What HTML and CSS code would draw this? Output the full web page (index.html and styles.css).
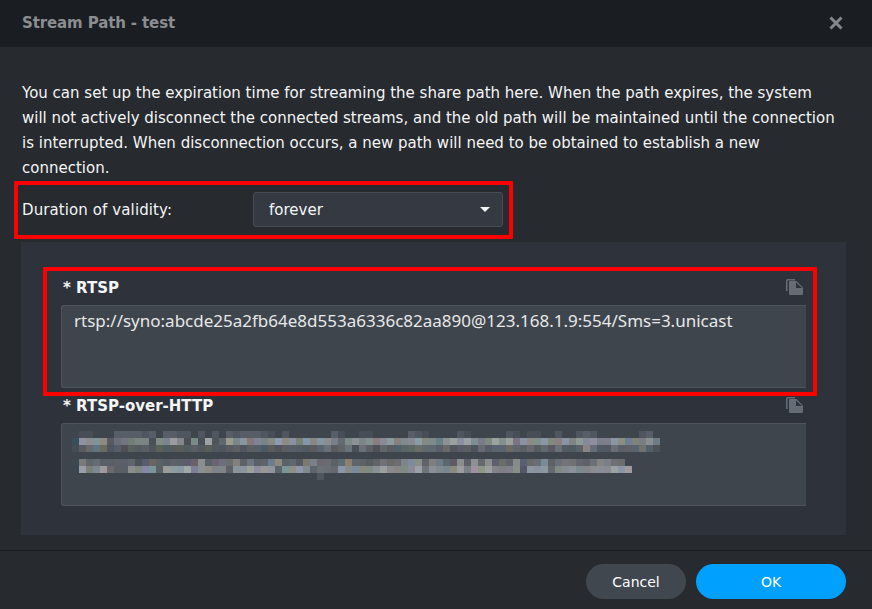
FILE: index.html
```html
<!DOCTYPE html>
<html lang="en">
<head>
<meta charset="utf-8">
<title>Stream Path - test</title>
<link rel="stylesheet" href="styles.css">
</head>
<body>
<div class="dialog">
  <header class="head">
    <h1 class="title">Stream Path - test</h1>
    <svg class="close" viewBox="0 0 14 14" width="14" height="14"><path d="M1.5 1.5l11 11M12.5 1.5l-11 11"/></svg>
  </header>
  <main class="content">
    <p class="intro">You can set up the expiration time for streaming the share path here. When the path expires, the system will not actively disconnect the connected streams, and the old path will be maintained until the connection is interrupted. When disconnection occurs, a new path will need to be obtained to establish a new connection.</p>
    <div class="duration">
      <span class="duration-label">Duration of validity:</span>
      <div class="select"><span>forever</span><i class="caret"></i></div>
      <div class="mark mark-a"></div>
    </div>
    <section class="panel">
      <div class="field field-a">
        <div class="field-head">
          <span class="field-label">* RTSP</span>
          <svg class="copy" viewBox="0 0 18 18" width="18" height="18"><path class="back" d="M6 1H2.500A1.500 1.500 0 0 0 1 2.500V13h1.500V2.500H10V1z"/><path class="front" d="M5 3h6.500L18 9.500V16a1 1 0 0 1-1 1H5a1 1 0 0 1-1-1V4a1 1 0 0 1 1-1z"/><path class="fold" d="M11 4.500v5.500h6z"/></svg>
        </div>
        <div class="box"><span class="url">rtsp://syno:abcde25a2fb64e8d553a6336c82aa890@123.168.1.9:554/Sms=3.unicast</span></div>
        <div class="mark mark-b"></div>
      </div>
      <div class="field field-b">
        <div class="field-head">
          <span class="field-label">* RTSP-over-HTTP</span>
          <svg class="copy" viewBox="0 0 18 18" width="18" height="18"><path class="back" d="M6 1H2.500A1.500 1.500 0 0 0 1 2.500V13h1.500V2.500H10V1z"/><path class="front" d="M5 3h6.500L18 9.500V16a1 1 0 0 1-1 1H5a1 1 0 0 1-1-1V4a1 1 0 0 1 1-1z"/><path class="fold" d="M11 4.500v5.500h6z"/></svg>
        </div>
        <div class="box box-blur"><svg id="mosaic" class="mosaic" width="588" height="56" viewBox="0 0 588 56"></svg></div>
      </div>
    </section>
  </main>
  <footer class="foot">
    <button class="btn btn-cancel">Cancel</button>
    <button class="btn btn-ok">OK</button>
  </footer>
</div>
<script src="mosaic.js"></script>
</body>
</html>
```
FILE: styles.css
```css
* { box-sizing: border-box; }
html, body { margin: 0; height: 100%; }
body { background: #272a2f; overflow: hidden; }
.dialog {
  width: 872px; height: 609px; display: flex; flex-direction: column;
  background: #272a2f; color: #f4f5f6;
  font-family: "DejaVu Sans", Verdana, sans-serif; font-size: 15px;
}
.head {
  height: 47px; flex: none; background: #1a1d22;
  display: flex; align-items: center; justify-content: space-between;
  padding: 0 29px 2px 22px;
}
.title { margin: 0; font-size: 15px; font-weight: 700; color: #8b8e91; letter-spacing: -0.12px; }
.close { fill: none; stroke: #85888b; stroke-width: 3; }
.content { flex: 1; padding: 34px 26px 0 21px; min-height: 0; }
.intro { margin: 0; padding-left: 1px; line-height: 25px; height: 100px; width: 820px; }
.duration { position: relative; display: flex; align-items: center; height: 35px; margin-top: 11px; padding-left: 1px; }
.duration-label { width: 231px; flex: none; letter-spacing: 0.1px; }
.select {
  width: 250px; height: 35px; background: #353a42; border: 1px solid #474c54; border-radius: 3px;
  display: flex; align-items: center; justify-content: space-between; padding: 0 12px 0 15px;
}
.caret { width: 0; height: 0; border-left: 5px solid transparent; border-right: 5px solid transparent; border-top: 5px solid #f4f5f6; }
.mark { position: absolute; border: 4px solid #fe0000; border-radius: 1px; pointer-events: none; }
.mark-a { left: -7px; top: -11px; width: 499px; height: 58px; }
.panel { height: 293px; margin-top: 15px; background: #2e323a; padding: 25px 40px 0 40px; }
.field { position: relative; }
.field-head { height: 38px; display: flex; justify-content: space-between; padding: 11px 2px 0 2px; }
.field-label { font-weight: 700; font-size: 15px; line-height: 20px; }
.copy { margin-right: 1px; }
.back { fill: #666c76; }
.front { fill: #666c76; }
.fold { fill: #2e323a; }
.field-a { height: 118px; }
.box {
  width: 745px; height: 83px; background: #3f454d; border: 1px solid #50555d; border-right: 0;
  border-radius: 3px 0 0 3px; padding: 3px 12px;
}
.url { font-family: "Noto Sans", sans-serif; font-size: 17px; line-height: 24px; color: #e6e8ea; }
.box-blur { padding: 7px 0 0 10px; }
.mosaic { display: block; }
.mark-b { left: -18px; top: 0; width: 774px; height: 129px; }
.foot {
  height: 59px; flex: none; border-top: 1px solid #1a1c20; background: #272a2f;
  display: flex; justify-content: flex-end; gap: 10px; padding: 13px 26px 0 0;
}
.btn {
  height: 35px; border: 0; border-radius: 18px; color: #fff;
  font-family: "DejaVu Sans", Verdana, sans-serif; font-size: 14px; padding: 0;
}
.btn-cancel { width: 100px; background: #41474e; }
.btn-ok { width: 150px; background: #00a0ff; }
```
FILE: mosaic.js
```js
var T = "50565f", U = "585e67", V = "484e57";
var tail = " 7a7e84 8a9090 6e7c88 7a8084 868a90 5a6472 707478 606a70";
var rows = [
  [0, 84, ". V V . . . U U U U T U . U U T T . T . T . U T U U U T V . T . . . . . . U V . . V V . . . . . U T V . . . . T V . . . . . T V . V V . . T . . T U T . . . . . . T U"],
  [7, 84, "3a4d5a 8f92a0 8a8e90 7f9496 8f8a7e 555a63 6b6e7a 70757e 737d78 7a8580 7d8285 4a5058 828a84 7a8590 9a9ca2 85858c 4a4f57 7a8a85 4a5058 9ba3a5 50555c 5d6870 9a9a8e 7a8688 8795a0 85787a 7f8496 7a8488 8a8a84 8b9cb0 8e8a84 8c90a0 7a8278 8296ae 8a8680 8296a8 8a8e90 7a7e88 656a72 7d8a8a 8a9296 7e858a 7f9290 8a7e82 8a8a96 8a9ca0 85827e 7f8a90 8a8a92 8a9ca8 848a80 7c8a88 6a7e88 8a9296 9aa09c 8a8e9e 9aa0a6 7f8e90 7a7a8a 7e8a80 9aa39e 84908e 9aa09a 7a7484 8a92a6 8c8a84 82908a 8a96a8 7e8a7e 8a8084 8a92a6 808484 8c9a92 858a9a 8f8e9e 7a808a 7e7e8c 8a96a6 8a8e84 6e7e94 808478" + tail],
  [14, 84, "444c55 585c62 666a6a 607584 6a6a5e 4f5560 585c68 504f55 5a6060 545c62 5a5f66 50555c 5a6256 4f5c64 565c5e 5a5c58 4f5c60 5a5e64 52595e 5a5e58 52585f 4f5560 585c62 5c6064 505660 5c5e62 565e68 4c5a66 5a5c5e 50555c 5a5e62 5a5e6a 565c64 505a62 5c5a5e 586470 6a7078 585c5e 606468 6a727c 4a5058 6a7076 5c6066 505058 60666a 585c60 506068 5a6468 5a6866 6a6e68 606870 5f6870 585e6a 6a6868 50565c 585c68 5a5e62 4e545c 666a74 585c64 5a6470 5a6470 6c6a64 60666e 5a6066 686870 585c60 5e6a70 5a5860 6a7078 545a64 4e5a60 5a6268 8a8484 666c78 505a64 525860 6a6c78 5a6068 5e6268 5a6470 70726e 52606c 4c5256"],
  [28, 80, "3c4852 7a7a7c 60666a 666c74 5a5e66 5a5e66 5c6068 5a5e6a 60646c 4c525a 585c70 6a6462 5c6264 545e64 5e6268 5a6068 5c5e70 6a6268 8a8e8e 5a6068 6a6472 6e6e7e 6a6e6c 848080 5c6268 6e7684 5a6068 60646a 6c7e8e 8a8a80 5a6268 5f6870 545a62 7a7a70 7a8088 6a6870 6a6a70 5a6268 5e6c74 8a806e 5f646a 5c6268 565c60 5e6468 707078 666a68 6c6c72 7e8488 7c8c9c 8a8e88 606468 807e7e 6e7a84 5a6870 5f5a64 8a8e8c 5c6068 8c9294 666a70 8a8e8e 5c6070 6a6e66 5f646c 868a8a 5a6074 666a6c 6a6e74 7a8a96 5c6268 6a6e78 747478 6e7274 60666c 5e6268 6c7078 848482 7a7e86 6e7074 6a6e6e"],
  [35, 80, "3a4650 9a9ca6 7a8078 7a8a92 a09a9e 6a6a6a 5a5f66 5a5e66 8a8e8a 808680 8686a8 7a9498 5a6068 9a9c96 8e9ca0 8a96a0 9fa8a8 7e7e96 8a9096 8f8a84 7e8488 7e8488 5e6268 8a949c 8c94a0 9aa09a 8a8ea0 9a9696 8e94a0 5e646c 7a9498 8e9088 8e96a8 808a90 5e646c 6a7074 6a6e74 666a70 8a96a8 868a8a 788a9c 86887e 7e8a84 8a9096 9aa09e 8a8a8e 8a8686 7e8a84 8a8a96 9aa0a6 6e7478 8a8e96 808a8e 7a8690 8a8a80 9a9ca0 7a8088 a090a2 8e9688 9aa09e 82828a 7e7e84 80808a 86908a 525866 8c96a0 8a92a0 8c98a0 646a70 808a84 868a92 8a9098 7a8a8e 84868a 8c8c90 8a8e96 8a8a92 9ca2a2 8a96a8 a09a9c"]
];
var names = { T: T, U: U, V: V };
var ns = "http://www.w3.org/2000/svg";
var svg = document.getElementById("mosaic");
function add(col, y, fill) {
  var r = document.createElementNS(ns, "rect");
  r.setAttribute("x", col * 7);
  r.setAttribute("y", y);
  r.setAttribute("width", 7);
  r.setAttribute("height", 7);
  r.setAttribute("fill", "#" + fill);
  svg.appendChild(r);
}
rows.forEach(function (row) {
  row[2].split(" ").slice(0, row[1]).forEach(function (c, i) {
    if (c === ".") return;
    add(i, row[0], names[c] || c);
  });
});
add(35, 42, "50555e");
```
